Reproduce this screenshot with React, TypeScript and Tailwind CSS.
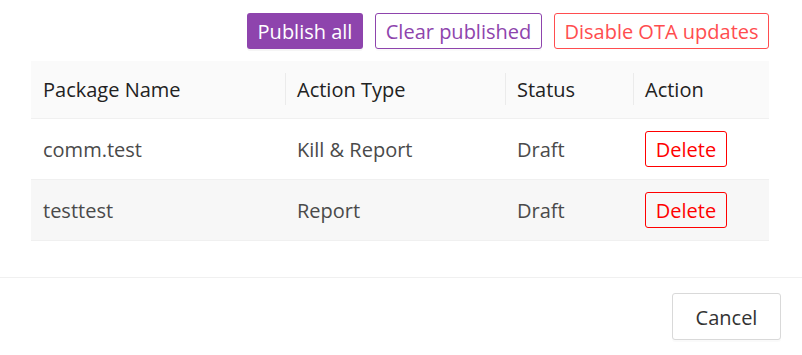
import React from "react";

interface Row {
  pkg: string;
  action: string;
  status: string;
}

const rows: Row[] = [
  { pkg: "comm.test", action: "Kill & Report", status: "Draft" },
  { pkg: "testtest", action: "Report", status: "Draft" },
];

const App: React.FC = () => {
  return (
    <div
      className="w-[802px] h-[355px] bg-white text-[#4a4a4a] text-[20px] overflow-hidden"
      style={{ fontFamily: "'Open Sans', 'Noto Sans', sans-serif" }}
    >
      <div className="pl-[31px] pr-[33px] pt-[13px] pb-[36px]">
        {/* toolbar */}
        <div className="flex justify-end gap-[12px] h-[36px]">
          <button className="h-[36px] w-[116px] pt-[1px] rounded-[3px] bg-[#8e44ad] text-white shadow-[0_2px_0_rgba(0,0,0,0.04)]">
            Publish all
          </button>
          <button className="h-[36px] w-[167px] pt-[1px] rounded-[3px] border border-[#8e44ad] text-[#8e44ad] bg-white shadow-[0_2px_0_rgba(0,0,0,0.02)]">
            Clear published
          </button>
          <button className="h-[36px] w-[215px] pt-[1px] rounded-[3px] border border-[#ff4d4f] text-[#ff4d4f] bg-white">
            Disable OTA updates
          </button>
        </div>

        <table className="mt-[12px] w-full border-collapse">
          <thead>
            <tr className="bg-[#fafafa] h-[57px] border-b border-[#f0f0f0] text-[#222]">
              <th className="w-[254px] text-left font-medium px-[12px] pt-[2px] relative">Package Name</th>
              <th className="w-[220px] text-left font-medium px-[12px] pt-[2px] relative">
                <span className="absolute left-0 top-[12px] h-[32px] w-px bg-[#ebebeb]" />
                Action Type
              </th>
              <th className="w-[128px] text-left font-medium px-[12px] pt-[2px] relative">
                <span className="absolute left-0 top-[12px] h-[32px] w-px bg-[#ebebeb]" />
                Status
              </th>
              <th className="text-left font-medium px-[12px] pt-[2px] relative">
                <span className="absolute left-0 top-[12px] h-[32px] w-px bg-[#ebebeb]" />
                Action
              </th>
            </tr>
          </thead>
          <tbody>
            {rows.map((r, i) => (
              <tr
                key={i}
                className={`h-[61px] border-b border-[#f0f0f0] ${i % 2 === 1 ? "bg-[#f7f7f7]" : "bg-white"}`}
              >
                <td className="px-[12px] pt-[2px]">{r.pkg}</td>
                <td className="px-[12px] pt-[2px]">{r.action}</td>
                <td className="px-[12px] pt-[2px]">{r.status}</td>
                <td className="px-[12px]">
                  <button className="h-[36px] w-[82px] pt-[2px] rounded-[3px] border border-[#ff0000] text-[#ff0000] bg-transparent">
                    Delete
                  </button>
                </td>
              </tr>
            ))}
          </tbody>
        </table>
      </div>

      {/* footer */}
      <div className="border-t border-[#f0f0f0] flex justify-end pt-[15px] pr-[21px]">
        <button className="h-[47px] w-[109px] pt-[3px] rounded-[3px] border border-[#d9d9d9] bg-white text-[#333] shadow-[0_2px_0_rgba(0,0,0,0.02)]">
          Cancel
        </button>
      </div>
    </div>
  );
};

export default App;
